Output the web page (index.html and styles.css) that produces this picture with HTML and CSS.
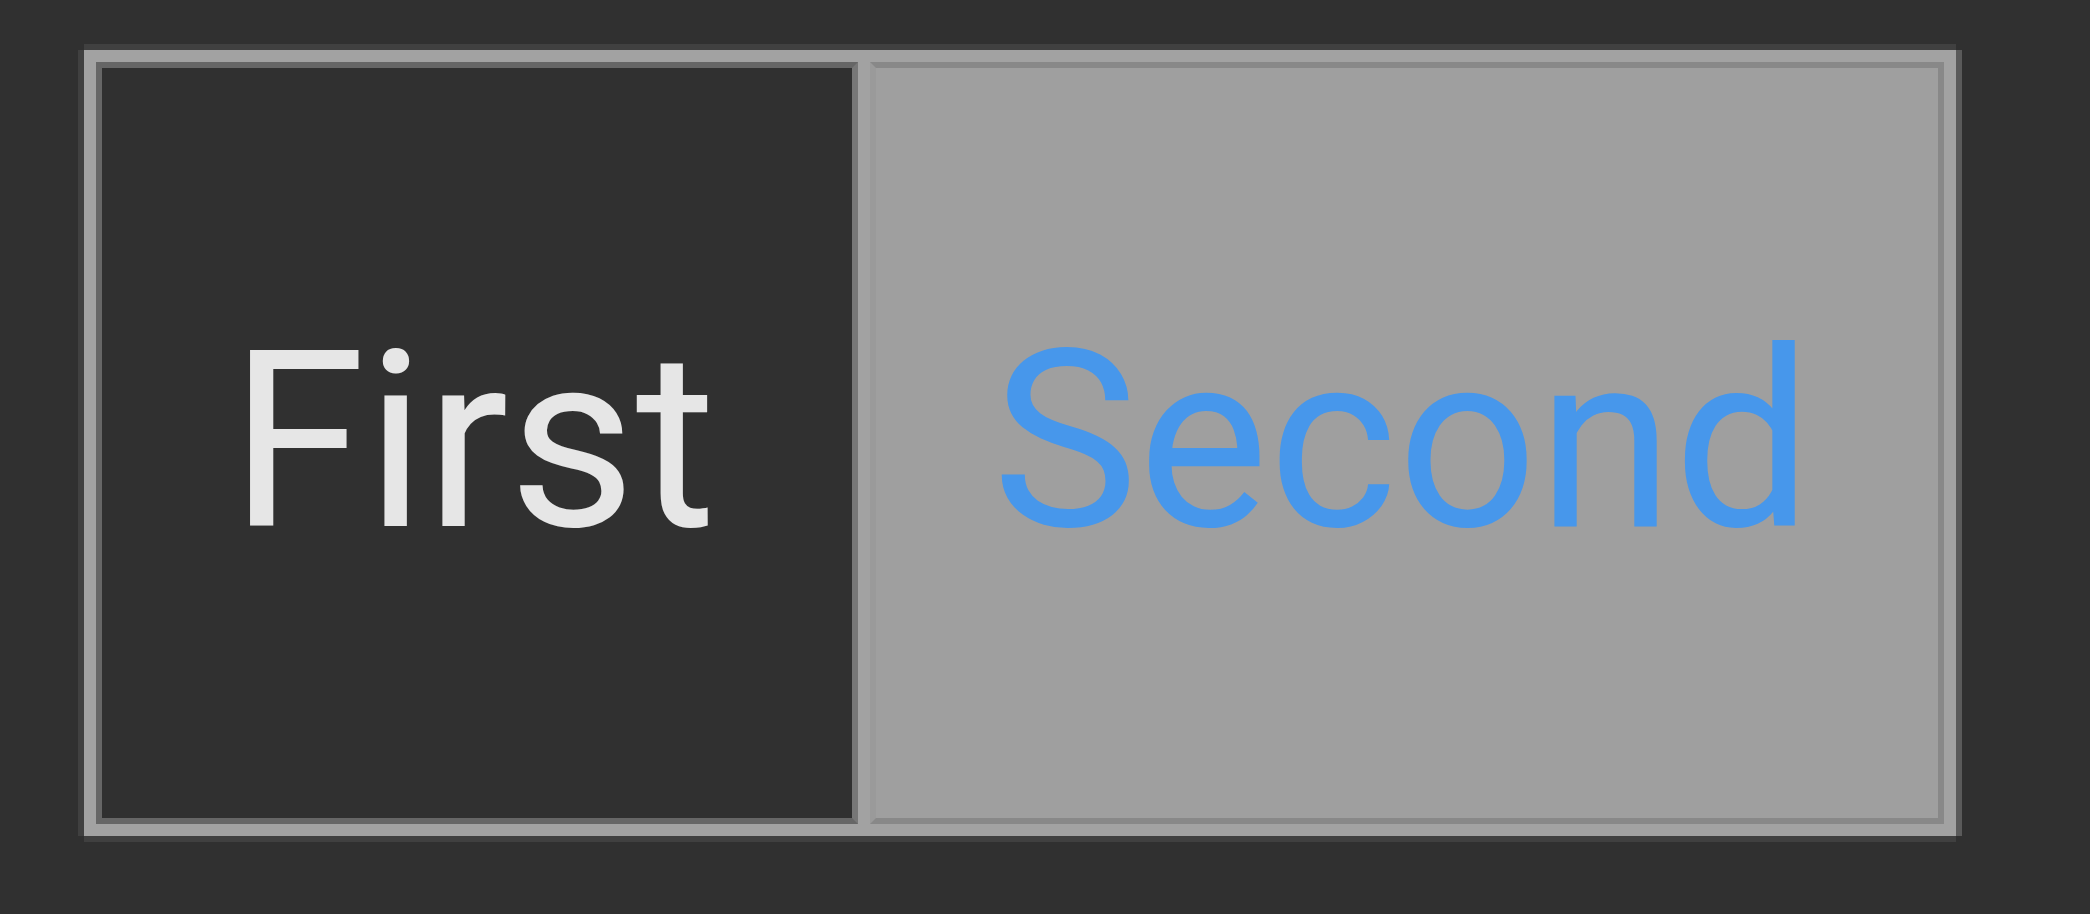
FILE: index.html
```html
<!DOCTYPE html>
<html>
<head>
<meta charset="utf-8">
<link rel="stylesheet" href="styles.css">
</head>
<body>
<div class="segmented">
  <div class="seg seg-first"><span class="label">First</span></div>
  <div class="seg seg-second"><span class="label">Second</span></div>
</div>
</body>
</html>
```
FILE: styles.css
```css
html, body {
  margin: 0;
  padding: 0;
  background: #303030;
  width: 2090px;
  height: 914px;
  overflow: hidden;
}
body {
  padding: 50px 0 0 84px;
  box-sizing: border-box;
  font-family: Roboto, "Noto Sans", sans-serif;
}
.segmented {
  display: flex;
  width: 1872px;
  height: 786px;
  box-sizing: border-box;
  border: 12px solid #a2a2a2;
  background: #a2a2a2;
  gap: 12px;
  box-shadow: 0 -6px 0 0 #404040, 0 6px 0 0 #404040, -6px 0 0 0 #404040, 6px 0 0 0 #5a5a5a;
}
.seg {
  box-sizing: border-box;
  height: 762px;
  display: flex;
  align-items: center;
  font-size: 246px;
}
.seg-first {
  width: 762px;
  background: #303030;
  border: 6px solid #666666;
  border-right-color: #777777;
  justify-content: center;
  padding-right: 8px;
  padding-bottom: 2px;
  color: #e6e6e6;
}
.seg-second {
  width: 1074px;
  background: #9f9f9f;
  border: 6px solid #888888;
  border-left-color: #9a9a9a;
  padding-left: 116px;
  padding-bottom: 2px;
  color: #4797eb;
}
.label {
  display: block;
  line-height: normal;
}
```
